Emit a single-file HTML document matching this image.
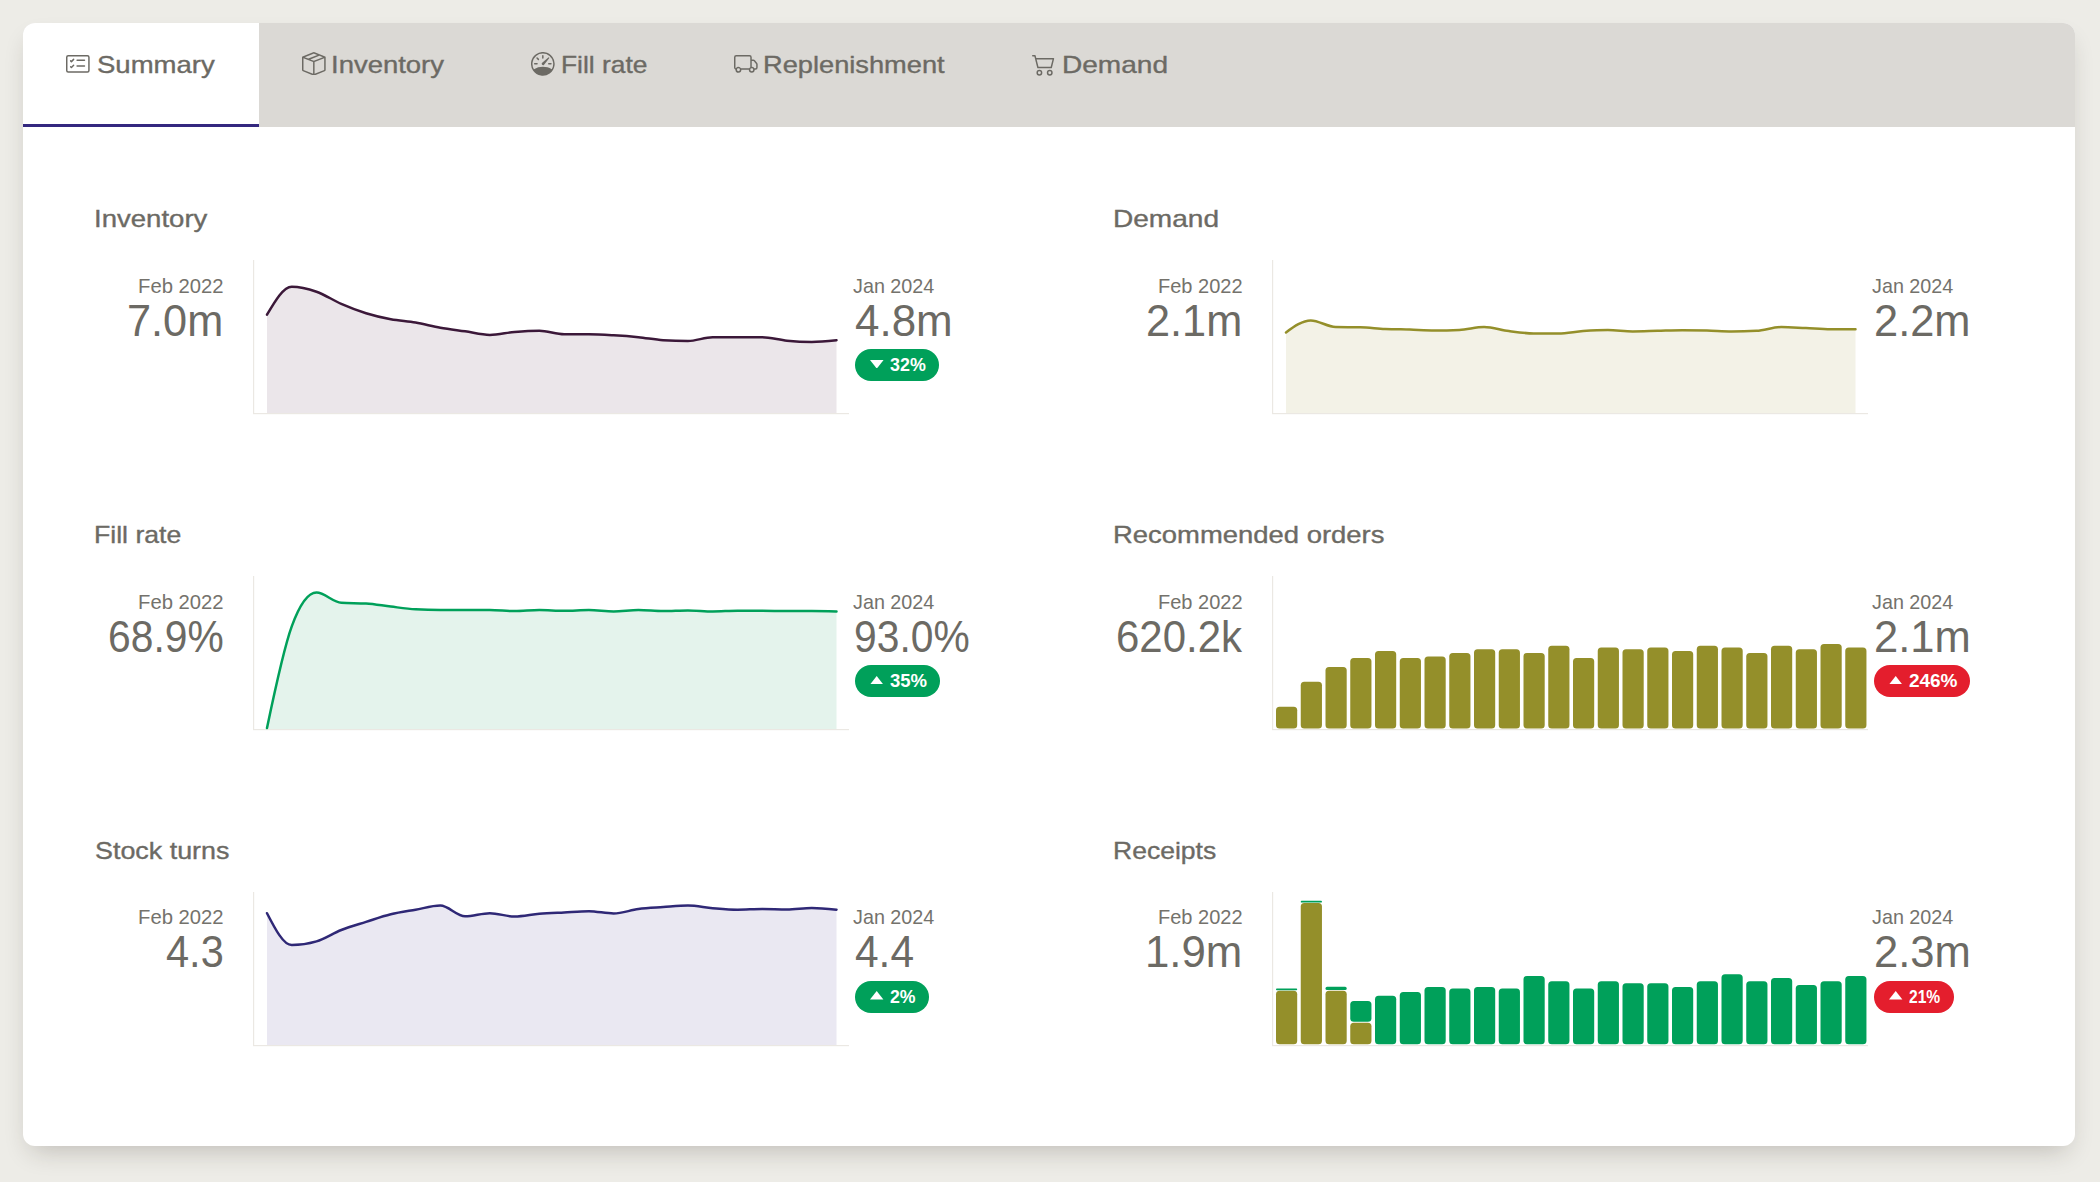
<!DOCTYPE html>
<html><head><meta charset="utf-8"><style>
html,body{margin:0;padding:0;}
body{width:2100px;height:1182px;background:#edece7;position:relative;overflow:hidden;font-family:"Liberation Sans",sans-serif;}
.card{position:absolute;left:23px;top:23px;width:2052px;height:1123px;background:#fff;border-radius:12px;box-shadow:0 12px 26px -8px rgba(40,35,25,0.24);overflow:hidden;}
.tabbar{position:absolute;left:0;top:0;width:2052px;height:104px;background:#dbd9d5;}
.active{position:absolute;left:0;top:0;width:236px;height:101px;background:#fff;border-bottom:3px solid #34287f;}
.ic{position:absolute;}
.t{position:absolute;height:100px;line-height:100px;white-space:nowrap;transform-origin:0 0;}
.badge{position:absolute;height:32px;border-radius:16px;}
svg.charts{position:absolute;left:0;top:0;}
</style></head><body>
<div class="card"><div class="tabbar"></div><div class="active"></div></div>
<svg class="charts" width="2100" height="1182" viewBox="0 0 2100 1182">
<rect x="253" y="260" width="1.2" height="153" fill="#ebe8e3"/><rect x="253" y="413" width="596" height="1.2" fill="#ebe8e3"/>
<rect x="1272" y="260" width="1.2" height="153" fill="#ebe8e3"/><rect x="1272" y="413" width="596" height="1.2" fill="#ebe8e3"/>
<rect x="253" y="576" width="1.2" height="153" fill="#ebe8e3"/><rect x="253" y="729" width="596" height="1.2" fill="#ebe8e3"/>
<rect x="1272" y="576" width="1.2" height="153" fill="#ebe8e3"/><rect x="1272" y="729" width="596" height="1.2" fill="#ebe8e3"/>
<rect x="253" y="892" width="1.2" height="153" fill="#ebe8e3"/><rect x="253" y="1045" width="596" height="1.2" fill="#ebe8e3"/>
<rect x="1272" y="892" width="1.2" height="153" fill="#ebe8e3"/><rect x="1272" y="1045" width="596" height="1.2" fill="#ebe8e3"/>
<path d="M267.00,314.70C275.25,300.70 283.51,286.70 291.76,286.70C300.01,286.70 308.27,288.83 316.52,291.70C324.78,294.57 333.03,300.30 341.28,303.90C349.54,307.50 357.79,310.73 366.04,313.30C374.30,315.87 382.55,317.75 390.80,319.30C399.06,320.85 407.31,321.20 415.57,322.60C423.82,324.00 432.07,326.25 440.33,327.70C448.58,329.15 456.83,330.10 465.09,331.30C473.34,332.50 481.59,334.90 489.85,334.90C498.10,334.90 506.36,332.68 514.61,332.00C522.86,331.32 531.12,330.80 539.37,330.80C547.62,330.80 555.88,334.30 564.13,334.30C572.38,334.30 580.64,334.30 588.89,334.30C597.14,334.30 605.40,334.82 613.65,335.30C621.91,335.78 630.16,336.38 638.41,337.20C646.67,338.02 654.92,339.67 663.17,340.20C671.43,340.73 679.68,341.00 687.93,341.00C696.19,341.00 704.44,337.20 712.70,337.20C720.95,337.20 729.20,337.20 737.46,337.20C745.71,337.20 753.96,337.20 762.22,337.20C770.47,337.20 778.72,339.92 786.98,340.70C795.23,341.48 803.49,341.90 811.74,341.90C819.99,341.90 828.25,341.05 836.50,340.20L836.50,413L267.00,413Z" fill="#ebe6ea"/><path d="M267.00,314.70C275.25,300.70 283.51,286.70 291.76,286.70C300.01,286.70 308.27,288.83 316.52,291.70C324.78,294.57 333.03,300.30 341.28,303.90C349.54,307.50 357.79,310.73 366.04,313.30C374.30,315.87 382.55,317.75 390.80,319.30C399.06,320.85 407.31,321.20 415.57,322.60C423.82,324.00 432.07,326.25 440.33,327.70C448.58,329.15 456.83,330.10 465.09,331.30C473.34,332.50 481.59,334.90 489.85,334.90C498.10,334.90 506.36,332.68 514.61,332.00C522.86,331.32 531.12,330.80 539.37,330.80C547.62,330.80 555.88,334.30 564.13,334.30C572.38,334.30 580.64,334.30 588.89,334.30C597.14,334.30 605.40,334.82 613.65,335.30C621.91,335.78 630.16,336.38 638.41,337.20C646.67,338.02 654.92,339.67 663.17,340.20C671.43,340.73 679.68,341.00 687.93,341.00C696.19,341.00 704.44,337.20 712.70,337.20C720.95,337.20 729.20,337.20 737.46,337.20C745.71,337.20 753.96,337.20 762.22,337.20C770.47,337.20 778.72,339.92 786.98,340.70C795.23,341.48 803.49,341.90 811.74,341.90C819.99,341.90 828.25,341.05 836.50,340.20" fill="none" stroke="#3b1839" stroke-width="2.5" stroke-linecap="round"/>
<path d="M1286.00,332.40C1294.25,326.45 1302.51,320.50 1310.76,320.50C1319.01,320.50 1327.27,326.80 1335.52,327.00C1343.78,327.20 1352.03,327.10 1360.28,327.30C1368.54,327.50 1376.79,328.52 1385.04,328.90C1393.30,329.28 1401.55,329.35 1409.80,329.60C1418.06,329.85 1426.31,330.40 1434.57,330.40C1442.82,330.40 1451.07,330.23 1459.33,329.90C1467.58,329.57 1475.83,327.00 1484.09,327.00C1492.34,327.00 1500.59,330.03 1508.85,331.10C1517.10,332.17 1525.36,333.40 1533.61,333.40C1541.86,333.40 1550.12,333.40 1558.37,333.40C1566.62,333.40 1574.88,331.65 1583.13,331.10C1591.38,330.55 1599.64,330.10 1607.89,330.10C1616.14,330.10 1624.40,331.40 1632.65,331.40C1640.91,331.40 1649.16,331.00 1657.41,330.80C1665.67,330.60 1673.92,330.20 1682.17,330.20C1690.43,330.20 1698.68,330.30 1706.93,330.50C1715.19,330.70 1723.44,331.40 1731.70,331.40C1739.95,331.40 1748.20,331.20 1756.46,330.80C1764.71,330.40 1772.96,327.00 1781.22,327.00C1789.47,327.00 1797.72,327.72 1805.98,328.10C1814.23,328.48 1822.49,329.30 1830.74,329.30C1838.99,329.30 1847.25,329.30 1855.50,329.30L1855.50,413L1286.00,413Z" fill="#f3f2e7"/><path d="M1286.00,332.40C1294.25,326.45 1302.51,320.50 1310.76,320.50C1319.01,320.50 1327.27,326.80 1335.52,327.00C1343.78,327.20 1352.03,327.10 1360.28,327.30C1368.54,327.50 1376.79,328.52 1385.04,328.90C1393.30,329.28 1401.55,329.35 1409.80,329.60C1418.06,329.85 1426.31,330.40 1434.57,330.40C1442.82,330.40 1451.07,330.23 1459.33,329.90C1467.58,329.57 1475.83,327.00 1484.09,327.00C1492.34,327.00 1500.59,330.03 1508.85,331.10C1517.10,332.17 1525.36,333.40 1533.61,333.40C1541.86,333.40 1550.12,333.40 1558.37,333.40C1566.62,333.40 1574.88,331.65 1583.13,331.10C1591.38,330.55 1599.64,330.10 1607.89,330.10C1616.14,330.10 1624.40,331.40 1632.65,331.40C1640.91,331.40 1649.16,331.00 1657.41,330.80C1665.67,330.60 1673.92,330.20 1682.17,330.20C1690.43,330.20 1698.68,330.30 1706.93,330.50C1715.19,330.70 1723.44,331.40 1731.70,331.40C1739.95,331.40 1748.20,331.20 1756.46,330.80C1764.71,330.40 1772.96,327.00 1781.22,327.00C1789.47,327.00 1797.72,327.72 1805.98,328.10C1814.23,328.48 1822.49,329.30 1830.74,329.30C1838.99,329.30 1847.25,329.30 1855.50,329.30" fill="none" stroke="#948f2a" stroke-width="2.5" stroke-linecap="round"/>
<path d="M267.00,728.00C275.25,688.47 283.51,648.93 291.76,626.40C300.01,603.87 308.27,592.60 316.52,592.60C324.78,592.60 333.03,602.33 341.28,602.80C349.54,603.27 357.79,603.03 366.04,603.50C374.30,603.97 382.55,605.63 390.80,606.60C399.06,607.57 407.31,608.77 415.57,609.30C423.82,609.83 432.07,610.10 440.33,610.10C448.58,610.10 456.83,610.10 465.09,610.10C473.34,610.10 481.59,610.10 489.85,610.10C498.10,610.10 506.36,611.10 514.61,611.10C522.86,611.10 531.12,610.10 539.37,610.10C547.62,610.10 555.88,610.80 564.13,610.80C572.38,610.80 580.64,610.10 588.89,610.10C597.14,610.10 605.40,611.40 613.65,611.40C621.91,611.40 630.16,610.10 638.41,610.10C646.67,610.10 654.92,611.10 663.17,611.10C671.43,611.10 679.68,610.40 687.93,610.40C696.19,610.40 704.44,611.40 712.70,611.40C720.95,611.40 729.20,610.70 737.46,610.70C745.71,610.70 753.96,610.70 762.22,610.70C770.47,610.70 778.72,611.10 786.98,611.10C795.23,611.10 803.49,611.10 811.74,611.10C819.99,611.10 828.25,611.25 836.50,611.40L836.50,729L267.00,729Z" fill="#e4f3ec"/><path d="M267.00,728.00C275.25,688.47 283.51,648.93 291.76,626.40C300.01,603.87 308.27,592.60 316.52,592.60C324.78,592.60 333.03,602.33 341.28,602.80C349.54,603.27 357.79,603.03 366.04,603.50C374.30,603.97 382.55,605.63 390.80,606.60C399.06,607.57 407.31,608.77 415.57,609.30C423.82,609.83 432.07,610.10 440.33,610.10C448.58,610.10 456.83,610.10 465.09,610.10C473.34,610.10 481.59,610.10 489.85,610.10C498.10,610.10 506.36,611.10 514.61,611.10C522.86,611.10 531.12,610.10 539.37,610.10C547.62,610.10 555.88,610.80 564.13,610.80C572.38,610.80 580.64,610.10 588.89,610.10C597.14,610.10 605.40,611.40 613.65,611.40C621.91,611.40 630.16,610.10 638.41,610.10C646.67,610.10 654.92,611.10 663.17,611.10C671.43,611.10 679.68,610.40 687.93,610.40C696.19,610.40 704.44,611.40 712.70,611.40C720.95,611.40 729.20,610.70 737.46,610.70C745.71,610.70 753.96,610.70 762.22,610.70C770.47,610.70 778.72,611.10 786.98,611.10C795.23,611.10 803.49,611.10 811.74,611.10C819.99,611.10 828.25,611.25 836.50,611.40" fill="none" stroke="#00a05a" stroke-width="2.5" stroke-linecap="round"/>
<path d="M267.00,913.20C275.25,929.15 283.51,945.10 291.76,945.10C300.01,945.10 308.27,943.87 316.52,941.40C324.78,938.93 333.03,933.25 341.28,930.00C349.54,926.75 357.79,924.52 366.04,921.90C374.30,919.28 382.55,916.33 390.80,914.30C399.06,912.27 407.31,911.15 415.57,909.70C423.82,908.25 432.07,905.60 440.33,905.60C448.58,905.60 456.83,916.30 465.09,916.30C473.34,916.30 481.59,913.20 489.85,913.20C498.10,913.20 506.36,916.60 514.61,916.60C522.86,916.60 531.12,914.50 539.37,913.80C547.62,913.10 555.88,912.83 564.13,912.40C572.38,911.97 580.64,911.20 588.89,911.20C597.14,911.20 605.40,913.50 613.65,913.50C621.91,913.50 630.16,910.07 638.41,909.00C646.67,907.93 654.92,907.67 663.17,907.10C671.43,906.53 679.68,905.60 687.93,905.60C696.19,905.60 704.44,907.52 712.70,908.20C720.95,908.88 729.20,909.70 737.46,909.70C745.71,909.70 753.96,909.00 762.22,909.00C770.47,909.00 778.72,909.40 786.98,909.40C795.23,909.40 803.49,907.90 811.74,907.90C819.99,907.90 828.25,908.80 836.50,909.70L836.50,1045L267.00,1045Z" fill="#eae8f2"/><path d="M267.00,913.20C275.25,929.15 283.51,945.10 291.76,945.10C300.01,945.10 308.27,943.87 316.52,941.40C324.78,938.93 333.03,933.25 341.28,930.00C349.54,926.75 357.79,924.52 366.04,921.90C374.30,919.28 382.55,916.33 390.80,914.30C399.06,912.27 407.31,911.15 415.57,909.70C423.82,908.25 432.07,905.60 440.33,905.60C448.58,905.60 456.83,916.30 465.09,916.30C473.34,916.30 481.59,913.20 489.85,913.20C498.10,913.20 506.36,916.60 514.61,916.60C522.86,916.60 531.12,914.50 539.37,913.80C547.62,913.10 555.88,912.83 564.13,912.40C572.38,911.97 580.64,911.20 588.89,911.20C597.14,911.20 605.40,913.50 613.65,913.50C621.91,913.50 630.16,910.07 638.41,909.00C646.67,907.93 654.92,907.67 663.17,907.10C671.43,906.53 679.68,905.60 687.93,905.60C696.19,905.60 704.44,907.52 712.70,908.20C720.95,908.88 729.20,909.70 737.46,909.70C745.71,909.70 753.96,909.00 762.22,909.00C770.47,909.00 778.72,909.40 786.98,909.40C795.23,909.40 803.49,907.90 811.74,907.90C819.99,907.90 828.25,908.80 836.50,909.70" fill="none" stroke="#2f2876" stroke-width="2.5" stroke-linecap="round"/>
<rect x="1276.00" y="706.70" width="21.2" height="21.80" rx="3.5" fill="#948f2a"/>
<rect x="1300.75" y="681.70" width="21.2" height="46.80" rx="3.5" fill="#948f2a"/>
<rect x="1325.50" y="667.10" width="21.2" height="61.40" rx="3.5" fill="#948f2a"/>
<rect x="1350.25" y="658.10" width="21.2" height="70.40" rx="3.5" fill="#948f2a"/>
<rect x="1375.00" y="651.10" width="21.2" height="77.40" rx="3.5" fill="#948f2a"/>
<rect x="1399.75" y="658.10" width="21.2" height="70.40" rx="3.5" fill="#948f2a"/>
<rect x="1424.50" y="656.40" width="21.2" height="72.10" rx="3.5" fill="#948f2a"/>
<rect x="1449.25" y="652.90" width="21.2" height="75.60" rx="3.5" fill="#948f2a"/>
<rect x="1474.00" y="649.20" width="21.2" height="79.30" rx="3.5" fill="#948f2a"/>
<rect x="1498.75" y="649.20" width="21.2" height="79.30" rx="3.5" fill="#948f2a"/>
<rect x="1523.50" y="652.90" width="21.2" height="75.60" rx="3.5" fill="#948f2a"/>
<rect x="1548.25" y="645.70" width="21.2" height="82.80" rx="3.5" fill="#948f2a"/>
<rect x="1573.00" y="658.10" width="21.2" height="70.40" rx="3.5" fill="#948f2a"/>
<rect x="1597.75" y="647.60" width="21.2" height="80.90" rx="3.5" fill="#948f2a"/>
<rect x="1622.50" y="649.20" width="21.2" height="79.30" rx="3.5" fill="#948f2a"/>
<rect x="1647.25" y="647.60" width="21.2" height="80.90" rx="3.5" fill="#948f2a"/>
<rect x="1672.00" y="651.10" width="21.2" height="77.40" rx="3.5" fill="#948f2a"/>
<rect x="1696.75" y="645.70" width="21.2" height="82.80" rx="3.5" fill="#948f2a"/>
<rect x="1721.50" y="647.60" width="21.2" height="80.90" rx="3.5" fill="#948f2a"/>
<rect x="1746.25" y="652.90" width="21.2" height="75.60" rx="3.5" fill="#948f2a"/>
<rect x="1771.00" y="645.70" width="21.2" height="82.80" rx="3.5" fill="#948f2a"/>
<rect x="1795.75" y="649.20" width="21.2" height="79.30" rx="3.5" fill="#948f2a"/>
<rect x="1820.50" y="644.10" width="21.2" height="84.40" rx="3.5" fill="#948f2a"/>
<rect x="1845.25" y="647.60" width="21.2" height="80.90" rx="3.5" fill="#948f2a"/>
<rect x="1276.00" y="990.80" width="21.2" height="53.50" rx="3.5" fill="#948f2a"/>
<rect x="1276.00" y="988.4" width="21.2" height="1.8" rx="0.9" fill="#00a05a"/>
<rect x="1300.75" y="902.90" width="21.2" height="141.40" rx="3.5" fill="#948f2a"/>
<rect x="1300.75" y="900.8" width="21.2" height="1.8" rx="0.9" fill="#00a05a"/>
<rect x="1325.50" y="990.80" width="21.2" height="53.50" rx="3.5" fill="#948f2a"/>
<rect x="1325.50" y="986.7" width="21.2" height="3.3" rx="1.6" fill="#00a05a"/>
<rect x="1350.25" y="1022.80" width="21.2" height="21.50" rx="3.5" fill="#948f2a"/>
<rect x="1350.25" y="1001.10" width="21.2" height="20.60" rx="3.5" fill="#00a05a"/>
<rect x="1375.00" y="995.80" width="21.2" height="48.50" rx="3.5" fill="#00a05a"/>
<rect x="1399.75" y="992.00" width="21.2" height="52.30" rx="3.5" fill="#00a05a"/>
<rect x="1424.50" y="987.00" width="21.2" height="57.30" rx="3.5" fill="#00a05a"/>
<rect x="1449.25" y="988.60" width="21.2" height="55.70" rx="3.5" fill="#00a05a"/>
<rect x="1474.00" y="987.00" width="21.2" height="57.30" rx="3.5" fill="#00a05a"/>
<rect x="1498.75" y="988.60" width="21.2" height="55.70" rx="3.5" fill="#00a05a"/>
<rect x="1523.50" y="976.00" width="21.2" height="68.30" rx="3.5" fill="#00a05a"/>
<rect x="1548.25" y="981.20" width="21.2" height="63.10" rx="3.5" fill="#00a05a"/>
<rect x="1573.00" y="988.60" width="21.2" height="55.70" rx="3.5" fill="#00a05a"/>
<rect x="1597.75" y="981.30" width="21.2" height="63.00" rx="3.5" fill="#00a05a"/>
<rect x="1622.50" y="983.20" width="21.2" height="61.10" rx="3.5" fill="#00a05a"/>
<rect x="1647.25" y="983.20" width="21.2" height="61.10" rx="3.5" fill="#00a05a"/>
<rect x="1672.00" y="987.00" width="21.2" height="57.30" rx="3.5" fill="#00a05a"/>
<rect x="1696.75" y="981.30" width="21.2" height="63.00" rx="3.5" fill="#00a05a"/>
<rect x="1721.50" y="974.30" width="21.2" height="70.00" rx="3.5" fill="#00a05a"/>
<rect x="1746.25" y="981.30" width="21.2" height="63.00" rx="3.5" fill="#00a05a"/>
<rect x="1771.00" y="978.00" width="21.2" height="66.30" rx="3.5" fill="#00a05a"/>
<rect x="1795.75" y="985.00" width="21.2" height="59.30" rx="3.5" fill="#00a05a"/>
<rect x="1820.50" y="981.30" width="21.2" height="63.00" rx="3.5" fill="#00a05a"/>
<rect x="1845.25" y="976.00" width="21.2" height="68.30" rx="3.5" fill="#00a05a"/>
</svg>
<div class="badge" style="left:855.2px;top:349.2px;width:84.1px;background:#00a05a"></div>
<svg class="ic" style="left:870.2px;top:359.6px" width="13.6" height="8.6" viewBox="0 0 13.6 8.6"><path d="M0 0H13.6L6.8 8.6Z" fill="#fff"/></svg>
<div class="badge" style="left:855.0px;top:665.0px;width:85.4px;background:#00a05a"></div>
<svg class="ic" style="left:870.2px;top:675.6px" width="13.4" height="8.6" viewBox="0 0 13.4 8.6"><path d="M6.7 0.1L13.4 8.6H0Z" fill="#fff"/></svg>
<div class="badge" style="left:1874.1px;top:665.0px;width:96.3px;background:#e41e2d"></div>
<svg class="ic" style="left:1889.3px;top:675.6px" width="13.4" height="8.6" viewBox="0 0 13.4 8.6"><path d="M6.7 0.1L13.4 8.6H0Z" fill="#fff"/></svg>
<div class="badge" style="left:855.0px;top:980.8px;width:73.5px;background:#00a05a"></div>
<svg class="ic" style="left:870.2px;top:991.4px" width="13.4" height="8.6" viewBox="0 0 13.4 8.6"><path d="M6.7 0.1L13.4 8.6H0Z" fill="#fff"/></svg>
<div class="badge" style="left:1874.1px;top:980.8px;width:79.7px;background:#e41e2d"></div>
<svg class="ic" style="left:1889.3px;top:991.4px" width="13.4" height="8.6" viewBox="0 0 13.4 8.6"><path d="M6.7 0.1L13.4 8.6H0Z" fill="#fff"/></svg>
<svg class="ic" style="left:66.3px;top:52.2px" width="23.68" height="23.68" viewBox="0 0 16 16" fill="#6c6a64"><path d="M14.5 3a.5.5 0 0 1 .5.5v9a.5.5 0 0 1-.5.5h-13a.5.5 0 0 1-.5-.5v-9a.5.5 0 0 1 .5-.5zm-13-1A1.5 1.5 0 0 0 0 3.5v9A1.5 1.5 0 0 0 1.5 14h13a1.5 1.5 0 0 0 1.5-1.5v-9A1.5 1.5 0 0 0 14.5 2z"/><path d="M7 5.5a.5.5 0 0 1 .5-.5h5a.5.5 0 0 1 0 1h-5a.5.5 0 0 1-.5-.5m-1.496-.854a.5.5 0 0 1 0 .708l-1.5 1.5a.5.5 0 0 1-.708 0l-.5-.5a.5.5 0 1 1 .708-.708l.146.147 1.146-1.147a.5.5 0 0 1 .708 0M7 9.5a.5.5 0 0 1 .5-.5h5a.5.5 0 0 1 0 1h-5a.5.5 0 0 1-.5-.5m-1.496-.854a.5.5 0 0 1 0 .708l-1.5 1.5a.5.5 0 0 1-.708 0l-.5-.5a.5.5 0 0 1 .708-.708l.146.147 1.146-1.147a.5.5 0 0 1 .708 0"/></svg>
<svg class="ic" style="left:301.9px;top:51.8px" width="23.68" height="23.68" viewBox="0 0 16 16" fill="#6c6a64"><path d="M8.186 1.113a.5.5 0 0 0-.372 0L1.846 3.5l2.404.961L10.404 2zm3.564 1.426L5.596 5 8 5.961 14.154 3.5zm3.25 1.7-6.5 2.6v7.922l6.5-2.6V4.24zM7.5 14.762V6.838L1 4.239v7.923zM7.443.184a1.5 1.5 0 0 1 1.114 0l7.129 2.852A.5.5 0 0 1 16 3.5v8.662a1 1 0 0 1-.629.928l-7.185 2.874a.5.5 0 0 1-.372 0L.63 13.09a1 1 0 0 1-.63-.928V3.5a.5.5 0 0 1 .314-.464z"/></svg>
<svg class="ic" style="left:531.3px;top:51.9px" width="23.68" height="23.68" viewBox="0 0 16 16" fill="#6c6a64"><path d="M8 2a.5.5 0 0 1 .5.5V4a.5.5 0 0 1-1 0V2.5A.5.5 0 0 1 8 2M3.732 3.732a.5.5 0 0 1 .707 0l.915.914a.5.5 0 1 1-.708.708l-.914-.915a.5.5 0 0 1 0-.707M2 8a.5.5 0 0 1 .5-.5h1.586a.5.5 0 0 1 0 1H2.5A.5.5 0 0 1 2 8m9.5 0a.5.5 0 0 1 .5-.5h1.5a.5.5 0 0 1 0 1H12a.5.5 0 0 1-.5-.5m.754-4.246a.39.39 0 0 0-.527-.02L7.547 7.31A.91.91 0 1 0 8.85 8.569l3.434-4.297a.39.39 0 0 0-.029-.518z"/><path fill-rule="evenodd" d="M6.664 15.889A8 8 0 1 1 9.336.11a8 8 0 0 1-2.672 15.78zm-4.665-4.283A11.95 11.95 0 0 1 8 10c2.186 0 4.236.585 6.001 1.606a7 7 0 1 0-12.002 0"/></svg>
<svg class="ic" style="left:734.3px;top:52.0px" width="23.68" height="23.68" viewBox="0 0 16 16" fill="#6c6a64"><path d="M0 3.5A1.5 1.5 0 0 1 1.5 2h9A1.5 1.5 0 0 1 12 3.5V5h1.02a1.5 1.5 0 0 1 1.17.563l1.481 1.85a1.5 1.5 0 0 1 .329.938V10.5a1.5 1.5 0 0 1-1.5 1.5H14a2 2 0 1 1-4 0H5a2 2 0 1 1-3.998-.085A1.5 1.5 0 0 1 0 10.5zm1.294 7.456A2 2 0 0 1 4.732 11h5.536a2 2 0 0 1 .732-.732V3.5a.5.5 0 0 0-.5-.5h-9a.5.5 0 0 0-.5.5v7a.5.5 0 0 0 .294.456M12 10a2 2 0 0 1 1.732 1h.768a.5.5 0 0 0 .5-.5V8.35a.5.5 0 0 0-.11-.312l-1.48-1.85A.5.5 0 0 0 13.02 6H12zm-9 1a1 1 0 1 0 0 2 1 1 0 0 0 0-2m9 0a1 1 0 1 0 0 2 1 1 0 0 0 0-2"/></svg>
<svg class="ic" style="left:1032.0px;top:52.0px" width="23.68" height="23.68" viewBox="0 0 16 16" fill="#6c6a64"><path d="M0 2.5A.5.5 0 0 1 .5 2H2a.5.5 0 0 1 .485.379L2.89 4H14.5a.5.5 0 0 1 .485.621l-1.5 6A.5.5 0 0 1 13 11H4a.5.5 0 0 1-.485-.379L1.61 3H.5a.5.5 0 0 1-.5-.5M3.14 5l1.25 5h8.22l1.25-5zM5 13a1 1 0 1 0 0 2 1 1 0 0 0 0-2m-2 1a2 2 0 1 1 4 0 2 2 0 0 1-4 0m9-1a1 1 0 1 0 0 2 1 1 0 0 0 0-2m-2 1a2 2 0 1 1 4 0 2 2 0 0 1-4 0"/></svg>
<div class="t" style="left:96.55px;top:14.80px;font-size:24px;font-weight:400;color:#6c6a64;transform:scaleX(1.1471);-webkit-text-stroke:0.35px #6c6a64;">Summary</div>
<div class="t" style="left:331.01px;top:14.80px;font-size:24px;font-weight:400;color:#6c6a64;transform:scaleX(1.1443);-webkit-text-stroke:0.35px #6c6a64;">Inventory</div>
<div class="t" style="left:561.11px;top:14.80px;font-size:24px;font-weight:400;color:#6c6a64;transform:scaleX(1.0974);-webkit-text-stroke:0.35px #6c6a64;">Fill rate</div>
<div class="t" style="left:763.43px;top:14.80px;font-size:24px;font-weight:400;color:#6c6a64;transform:scaleX(1.1348);-webkit-text-stroke:0.35px #6c6a64;">Replenishment</div>
<div class="t" style="left:1061.66px;top:14.80px;font-size:24px;font-weight:400;color:#6c6a64;transform:scaleX(1.1690);-webkit-text-stroke:0.35px #6c6a64;">Demand</div>
<div class="t" style="left:93.70px;top:168.90px;font-size:24px;font-weight:400;color:#6c6a64;transform:scaleX(1.1485);-webkit-text-stroke:0.35px #6c6a64;">Inventory</div>
<div class="t" style="left:1112.96px;top:169.00px;font-size:24px;font-weight:400;color:#6c6a64;transform:scaleX(1.1690);-webkit-text-stroke:0.35px #6c6a64;">Demand</div>
<div class="t" style="left:94.08px;top:485.00px;font-size:24px;font-weight:400;color:#6c6a64;transform:scaleX(1.1092);-webkit-text-stroke:0.35px #6c6a64;">Fill rate</div>
<div class="t" style="left:1112.71px;top:485.10px;font-size:24px;font-weight:400;color:#6c6a64;transform:scaleX(1.1430);-webkit-text-stroke:0.35px #6c6a64;">Recommended orders</div>
<div class="t" style="left:94.88px;top:801.00px;font-size:24px;font-weight:400;color:#6c6a64;transform:scaleX(1.1195);-webkit-text-stroke:0.35px #6c6a64;">Stock turns</div>
<div class="t" style="left:1113.09px;top:801.00px;font-size:24px;font-weight:400;color:#6c6a64;transform:scaleX(1.1055);-webkit-text-stroke:0.35px #6c6a64;">Receipts</div>
<div class="t" style="left:138.07px;top:236.20px;font-size:21px;font-weight:400;color:#74726c;transform:scaleX(0.9651);">Feb 2022</div>
<div class="t" style="left:853.26px;top:236.20px;font-size:21px;font-weight:400;color:#74726c;transform:scaleX(0.9412);">Jan 2024</div>
<div class="t" style="left:1157.99px;top:236.20px;font-size:21px;font-weight:400;color:#74726c;transform:scaleX(0.9535);">Feb 2022</div>
<div class="t" style="left:1871.86px;top:236.20px;font-size:21px;font-weight:400;color:#74726c;transform:scaleX(0.9412);">Jan 2024</div>
<div class="t" style="left:138.07px;top:552.00px;font-size:21px;font-weight:400;color:#74726c;transform:scaleX(0.9651);">Feb 2022</div>
<div class="t" style="left:853.26px;top:552.00px;font-size:21px;font-weight:400;color:#74726c;transform:scaleX(0.9412);">Jan 2024</div>
<div class="t" style="left:1157.99px;top:552.00px;font-size:21px;font-weight:400;color:#74726c;transform:scaleX(0.9535);">Feb 2022</div>
<div class="t" style="left:1871.86px;top:552.00px;font-size:21px;font-weight:400;color:#74726c;transform:scaleX(0.9412);">Jan 2024</div>
<div class="t" style="left:138.07px;top:867.00px;font-size:21px;font-weight:400;color:#74726c;transform:scaleX(0.9651);">Feb 2022</div>
<div class="t" style="left:853.26px;top:867.00px;font-size:21px;font-weight:400;color:#74726c;transform:scaleX(0.9412);">Jan 2024</div>
<div class="t" style="left:1157.99px;top:867.00px;font-size:21px;font-weight:400;color:#74726c;transform:scaleX(0.9535);">Feb 2022</div>
<div class="t" style="left:1871.86px;top:867.00px;font-size:21px;font-weight:400;color:#74726c;transform:scaleX(0.9412);">Jan 2024</div>
<div class="t" style="left:127.31px;top:271.00px;font-size:43.6px;font-weight:400;color:#6c6a64;transform:scaleX(0.9935);">7.0m</div>
<div class="t" style="left:854.59px;top:271.00px;font-size:43.6px;font-weight:400;color:#6c6a64;transform:scaleX(1.0075);">4.8m</div>
<div class="t" style="left:1146.21px;top:271.00px;font-size:43.6px;font-weight:400;color:#6c6a64;transform:scaleX(0.9935);">2.1m</div>
<div class="t" style="left:1874.01px;top:271.00px;font-size:43.6px;font-weight:400;color:#6c6a64;transform:scaleX(0.9957);">2.2m</div>
<div class="t" style="left:108.03px;top:587.00px;font-size:43.6px;font-weight:400;color:#6c6a64;transform:scaleX(0.9358);">68.9%</div>
<div class="t" style="left:854.13px;top:587.00px;font-size:43.6px;font-weight:400;color:#6c6a64;transform:scaleX(0.9358);">93.0%</div>
<div class="t" style="left:1115.97px;top:586.80px;font-size:43.6px;font-weight:400;color:#6c6a64;transform:scaleX(0.9628);">620.2k</div>
<div class="t" style="left:1874.20px;top:587.00px;font-size:43.6px;font-weight:400;color:#6c6a64;transform:scaleX(0.9978);">2.1m</div>
<div class="t" style="left:165.65px;top:902.20px;font-size:43.6px;font-weight:400;color:#6c6a64;transform:scaleX(0.9534);">4.3</div>
<div class="t" style="left:855.03px;top:902.20px;font-size:43.6px;font-weight:400;color:#6c6a64;transform:scaleX(0.9741);">4.4</div>
<div class="t" style="left:1145.19px;top:902.20px;font-size:43.6px;font-weight:400;color:#6c6a64;transform:scaleX(1.0044);">1.9m</div>
<div class="t" style="left:1874.00px;top:902.20px;font-size:43.6px;font-weight:400;color:#6c6a64;transform:scaleX(1.0000);">2.3m</div>
<div class="t" style="left:890.06px;top:315.00px;font-size:19px;font-weight:700;color:#fff;transform:scaleX(0.9405);">32%</div>
<div class="t" style="left:889.82px;top:630.80px;font-size:19px;font-weight:700;color:#fff;transform:scaleX(0.9757);">35%</div>
<div class="t" style="left:1908.90px;top:630.80px;font-size:19px;font-weight:700;color:#fff;transform:scaleX(1.0000);">246%</div>
<div class="t" style="left:889.87px;top:946.60px;font-size:19px;font-weight:700;color:#fff;transform:scaleX(0.9308);">2%</div>
<div class="t" style="left:1909.08px;top:946.60px;font-size:19px;font-weight:700;color:#fff;transform:scaleX(0.8216);">21%</div>
</body></html>
